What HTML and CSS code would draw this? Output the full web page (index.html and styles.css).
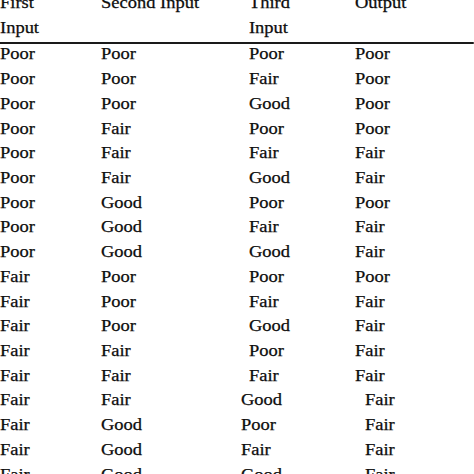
FILE: index.html
```html
<!DOCTYPE html>
<html>
<head>
<meta charset="utf-8">
<link rel="stylesheet" href="styles.css">
</head>
<body>
<div class="sheet">
  <div class="row head">
    <div class="cell">First<br>Input</div>
    <div class="cell">Second Input</div>
    <div class="cell">Third<br>Input</div>
    <div class="cell">Output</div>
  </div>
  <div class="body">
    <div class="row"><div class="cell">Poor</div><div class="cell">Poor</div><div class="cell">Poor</div><div class="cell">Poor</div></div>
    <div class="row"><div class="cell">Poor</div><div class="cell">Poor</div><div class="cell">Fair</div><div class="cell">Poor</div></div>
    <div class="row"><div class="cell">Poor</div><div class="cell">Poor</div><div class="cell">Good</div><div class="cell">Poor</div></div>
    <div class="row"><div class="cell">Poor</div><div class="cell">Fair</div><div class="cell">Poor</div><div class="cell">Poor</div></div>
    <div class="row"><div class="cell">Poor</div><div class="cell">Fair</div><div class="cell">Fair</div><div class="cell">Fair</div></div>
    <div class="row"><div class="cell">Poor</div><div class="cell">Fair</div><div class="cell">Good</div><div class="cell">Fair</div></div>
    <div class="row"><div class="cell">Poor</div><div class="cell">Good</div><div class="cell">Poor</div><div class="cell">Poor</div></div>
    <div class="row"><div class="cell">Poor</div><div class="cell">Good</div><div class="cell">Fair</div><div class="cell">Fair</div></div>
    <div class="row"><div class="cell">Poor</div><div class="cell">Good</div><div class="cell">Good</div><div class="cell">Fair</div></div>
    <div class="row"><div class="cell">Fair</div><div class="cell">Poor</div><div class="cell">Poor</div><div class="cell">Poor</div></div>
    <div class="row"><div class="cell">Fair</div><div class="cell">Poor</div><div class="cell">Fair</div><div class="cell">Fair</div></div>
    <div class="row"><div class="cell">Fair</div><div class="cell">Poor</div><div class="cell">Good</div><div class="cell">Fair</div></div>
    <div class="row"><div class="cell">Fair</div><div class="cell">Fair</div><div class="cell">Poor</div><div class="cell">Fair</div></div>
    <div class="row"><div class="cell">Fair</div><div class="cell">Fair</div><div class="cell">Fair</div><div class="cell">Fair</div></div>
    <div class="row shifted"><div class="cell">Fair</div><div class="cell">Fair</div><div class="cell">Good</div><div class="cell">Fair</div></div>
    <div class="row shifted"><div class="cell">Fair</div><div class="cell">Good</div><div class="cell">Poor</div><div class="cell">Fair</div></div>
    <div class="row shifted"><div class="cell">Fair</div><div class="cell">Good</div><div class="cell">Fair</div><div class="cell">Fair</div></div>
    <div class="row shifted"><div class="cell">Fair</div><div class="cell">Good</div><div class="cell">Good</div><div class="cell">Fair</div></div>
  </div>
</div>
</body>
</html>
```
FILE: styles.css
```css
html, body {
  margin: 0;
  padding: 0;
  background: #ffffff;
  overflow: hidden;
}
body {
  width: 474px;
  height: 474px;
}
.sheet {
  width: 423.2px;
  margin-top: -9.2px;
  transform: scaleX(1.12);
  transform-origin: 0 0;
  font-family: "Liberation Serif", "Times New Roman", serif;
  font-size: 16.5px;
  line-height: 24.72px;
  color: #0d0d0d;
  -webkit-text-stroke: 0.25px #0d0d0d;
}
.row {
  display: grid;
  grid-template-columns: 90.2px 132.1px 94.7px 1fr;
}
.head {
  padding-bottom: 1.5px;
  border-bottom: 2px solid #1a1a1a;
}
.body {
  margin-top: -1.4px;
}
.cell {
  white-space: nowrap;
}
.shifted .cell:nth-child(3) {
  margin-left: -7.1px;
}
.shifted .cell:nth-child(4) {
  margin-left: 8.9px;
}
```
